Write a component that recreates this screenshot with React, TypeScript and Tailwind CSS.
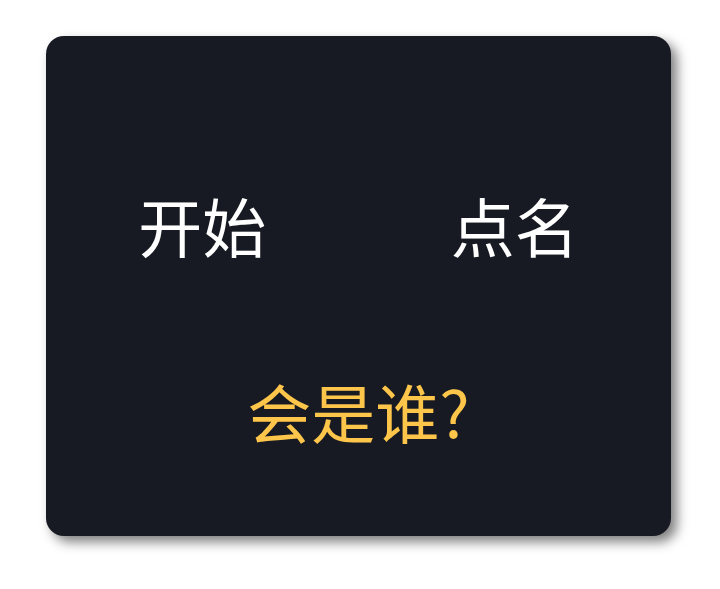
export default function App() {
  return (
    <div className="w-[720px] h-[589px] bg-white pt-[36px] pl-[46px]" style={{ fontFamily: '"Noto Sans CJK SC", "Noto Sans", sans-serif' }}>
      <div className="w-[625px] h-[500px] rounded-[18px] bg-[#171923] shadow-[6px_6px_12px_rgba(0,0,0,0.5)] flex flex-col pt-[156px]">
        <div className="flex justify-around text-[64px] leading-[64px] text-white">
          <span>开始</span>
          <span>点名</span>
        </div>
        <div className="mt-[122px] text-center text-[64px] leading-[64px] text-[#fdc54a]">
          会是谁?
        </div>
      </div>
    </div>
  );
}
